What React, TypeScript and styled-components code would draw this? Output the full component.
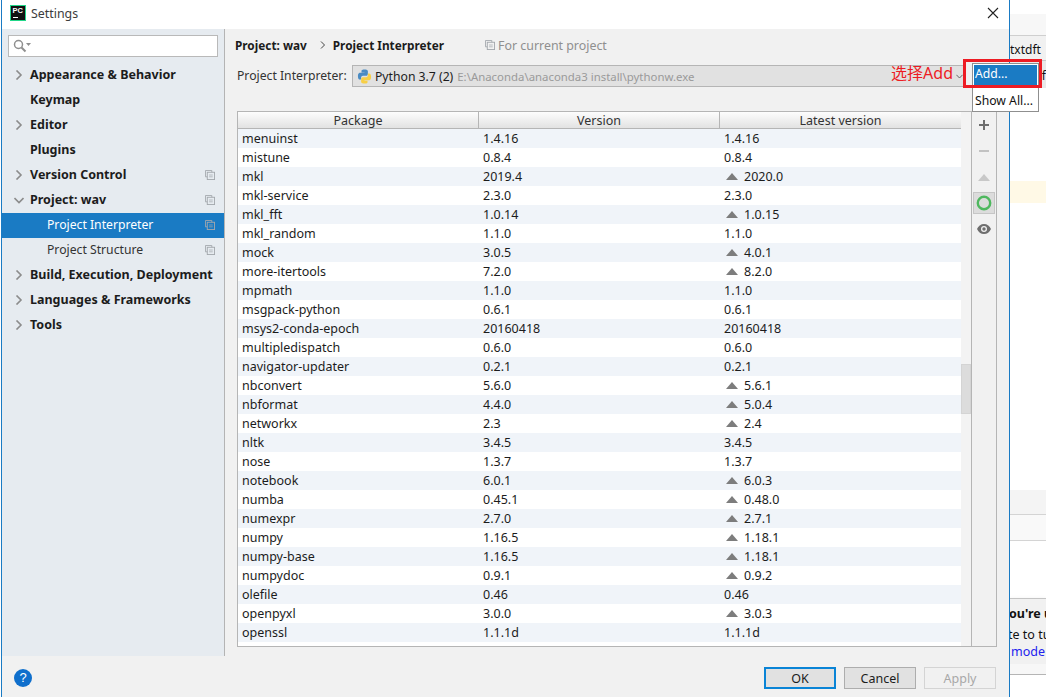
import React from "react";
import styled, { createGlobalStyle } from "styled-components";

const Global = createGlobalStyle`
  html, body { margin: 0; padding: 0; background: #fff; overflow: hidden; }
  #root { width: 1046px; height: 697px; }
  * { box-sizing: border-box; }
`;

const FONT = `"Noto Sans", "Noto Sans CJK SC", sans-serif`;

const Screen = styled.div`
  position: relative;
  width: 1046px;
  height: 697px;
  display: flex;
  overflow: hidden;
  background: #fff;
  padding-left: 1px;
  font: 12.5px ${FONT};
  color: #1c1c1c;
`;

const Dialog = styled.div`
  width: 1009px;
  height: 697px;
  flex: none;
  display: flex;
  flex-direction: column;
  border-left: 1px solid #1a7bc4;
  border-right: 1px solid #1a7bc4;
  background: #f1f1f1;
`;

const TitleBar = styled.div`
  height: 29px;
  flex: none;
  background: #fff;
  display: flex;
  align-items: center;
  padding: 0 10px 3px 8px;
  gap: 5px;
  position: relative;
`;

const Logo = styled.div`
  width: 16px;
  height: 16px;
  background: #111;
  border: 1px solid #21d789;
  color: #fff;
  font: bold 7.5px/8px "Liberation Sans", sans-serif;
  padding-left: 1.5px;
  padding-top: 1px;
  position: relative;
  &::after {
    content: "";
    position: absolute;
    left: 2px;
    bottom: 2px;
    width: 5px;
    height: 1px;
    background: #fff;
  }
`;

const TitleText = styled.span`
  color: #3c3c3c;
  font-size: 12.4px;
`;

const CloseBtn = styled.div`
  margin-left: auto;
  width: 12px;
  height: 12px;
  display: flex;
`;

const Body = styled.div`
  flex: 1;
  min-height: 0;
  display: flex;
`;

const Sidebar = styled.div`
  width: 223px;
  flex: none;
  background: #e6ebf0;
  border-right: 1px solid #b4b4b4;
  padding-top: 6px;
  display: flex;
  flex-direction: column;
`;

const SearchBox = styled.div`
  width: 210px;
  height: 22px;
  margin-left: 6px;
  margin-bottom: 6px;
  background: #fff;
  border: 1px solid #b9b9b9;
  display: flex;
  align-items: center;
  padding-left: 4px;
`;

const NavRow = styled.div<{ $depth?: number; $selected?: boolean; $bold?: boolean }>`
  height: 25px;
  flex: none;
  display: flex;
  align-items: center;
  padding: 0 9px 2px ${(p) => (p.$depth ? 45 : 12)}px;
  background: ${(p) => (p.$selected ? "#1a7bc4" : "transparent")};
  color: ${(p) => (p.$selected ? "#fff" : p.$depth ? "#333" : "#1c1c1c")};
  font-weight: ${(p) => (p.$bold ? 700 : 400)};
  font-size: ${(p) => (p.$bold ? "12.5px" : "12.2px")};
`;

const Arrow = styled.span`
  width: 16px;
  flex: none;
  display: flex;
  align-items: center;
`;

const NavLabel = styled.span`
  flex: 1;
  white-space: nowrap;
`;

const Main = styled.div`
  flex: 1;
  min-width: 0;
  padding: 0 12px 9px 12px;
  display: flex;
  flex-direction: column;
`;

const Breadcrumb = styled.div`
  height: 34px;
  flex: none;
  display: flex;
  align-items: center;
  margin-left: -2px;
  padding-bottom: 2px;
  font-size: 11.8px;
  font-weight: 700;
  white-space: nowrap;
`;

const CrumbSep = styled.span`
  width: 26px;
  display: flex;
  justify-content: center;
  padding-left: 6px;
`;

const Scope = styled.span`
  margin-left: 41px;
  display: flex;
  align-items: center;
  gap: 3px;
  font-size: 12.4px;
  font-weight: 400;
  color: #8f8f8f;
`;

const InterpreterRow = styled.div`
  height: 24px;
  flex: none;
  display: flex;
  align-items: center;
  margin-right: 31px;
  margin-bottom: 24px;
  white-space: nowrap;
`;

const FieldLabel = styled.span`
  width: 115px;
  flex: none;
  font-size: 12.2px;
  color: #333;
`;

const Combo = styled.div`
  flex: 1;
  height: 22px;
  margin-top: 2px;
  background: #e1e1e1;
  border: 1px solid #b5b5b5;
  display: flex;
  align-items: center;
  padding: 0 2px 0 4px;
  gap: 3px;
  font-size: 12.2px;
`;

const InterpreterName = styled.span`
  margin-right: 1px;
`;

const Path = styled.span`
  color: #9a9a9a;
  font-size: 11.4px;
`;

const ComboNote = styled.span`
  margin-left: auto;
  margin-bottom: 6px;
  color: #ed1c24;
  font-size: 16px;
  line-height: 16px;
`;

const PackagesFrame = styled.div`
  flex: 1;
  min-height: 0;
  display: flex;
  border: 1px solid #b5b5b5;
  background: #f1f1f1;
`;

const TableWrap = styled.div`
  width: 723px;
  flex: none;
  display: flex;
  flex-direction: column;
  background: #fff;
`;

const HeaderRow = styled.div`
  height: 17px;
  flex: none;
  display: grid;
  grid-template-columns: 241px 241px 241px;
  background: linear-gradient(#fdfdfd, #e2e2e2);
  border-bottom: 1px solid #b5b5b5;
`;

const HeaderCell = styled.div`
  text-align: center;
  line-height: 18px;
  color: #333;
  border-right: 1px solid #b5b5b5;
  margin-bottom: 1px;
  &:last-child { border-right: none; }
`;

const DataRow = styled.div<{ $odd: boolean }>`
  height: 19px;
  flex: none;
  display: grid;
  grid-template-columns: 241px 241px 241px;
  background: ${(p) => (p.$odd ? "#f0f4f9" : "#fff")};
  line-height: 20px;
`;

const Cell = styled.div`
  padding-left: 4px;
  white-space: nowrap;
`;

const UpdateCell = styled(Cell)`
  padding-left: 6px;
  display: flex;
  align-items: flex-start;
  gap: 6px;
`;

const RowTriangle = styled.span`
  display: flex;
  margin-top: 6px;
`;

const ScrollTrack = styled.div`
  width: 10px;
  flex: none;
  background: #f3f3f3;
  padding-top: 252px;
`;

const ScrollThumb = styled.div`
  height: 50px;
  background: #dcdcdc;
  border: 1px solid #d4d4d4;
`;

const SideTools = styled.div`
  flex: 1;
  border-left: 1px solid #b5b5b5;
  padding-top: 2px;
  display: flex;
  flex-direction: column;
  align-items: center;
`;

const ToolBtn = styled.div<{ $active?: boolean }>`
  width: 22px;
  height: 22px;
  margin-bottom: 4px;
  display: flex;
  align-items: center;
  justify-content: center;
  background: ${(p) => (p.$active ? "#dcdcdc" : "transparent")};
  border: 1px solid ${(p) => (p.$active ? "#c6c6c6" : "transparent")};
`;

const Footer = styled.div`
  height: 41px;
  flex: none;
  display: flex;
  align-items: flex-start;
  padding: 11px 13px 0 12px;
  gap: 8px;
`;

const Help = styled.div`
  width: 18px;
  height: 18px;
  margin-top: 2px;
  margin-right: auto;
  border-radius: 50%;
  background: #0f6fcc;
  color: #fff;
  font: 13px/18px "Liberation Sans", sans-serif;
  text-align: center;
`;

const Button = styled.div<{ $primary?: boolean; $disabled?: boolean }>`
  width: 72px;
  height: 22px;
  display: flex;
  align-items: center;
  justify-content: center;
  background: ${(p) => (p.$disabled ? "#f1f1f1" : "#e1e1e1")};
  border: ${(p) =>
    p.$primary ? "2px solid #0a84d6" : p.$disabled ? "1px solid #d4d4d4" : "1px solid #adadad"};
  color: ${(p) => (p.$disabled ? "#a8a8a8" : "#1c1c1c")};
`;

const Backdrop = styled.div`
  flex: 1;
  min-width: 0;
  display: flex;
  flex-direction: column;
  overflow: hidden;
  color: #111;
  white-space: nowrap;
`;

const Band = styled.div<{ $h: number; $bg?: string; $line?: string; $lh?: number; $right?: boolean }>`
  height: ${(p) => p.$h}px;
  flex: none;
  background: ${(p) => p.$bg ?? "#fff"};
  border-bottom: ${(p) => (p.$line ? `1px solid ${p.$line}` : "none")};
  line-height: ${(p) => p.$lh ?? p.$h - 1}px;
  font-size: 12px;
  text-align: ${(p) => (p.$right ? "right" : "left")};
`;

const Notice = styled.div`
  height: 66px;
  flex: none;
  background: #f1f1f1;
  border-top: 1px solid #c4c4c4;
  box-shadow: 0 3px 5px rgba(0, 0, 0, 0.25);
  padding-left: 1px;
  line-height: 17px;
  padding-top: 6px;
`;

const NoticeTitle = styled.div`
  font-weight: 700;
  height: 21px;
  margin-left: -2px;
`;

const NoticeLine = styled.div`
  margin-left: -3px;
`;

const NoticeLink = styled.div`
  color: #2222ee;
`;

const Menu = styled.div`
  position: absolute;
  left: 972px;
  top: 63px;
  width: 67px;
  height: 49px;
  background: #fff;
  border: 1px solid #8f8f8f;
  padding: 1px;
  font-size: 12.2px;
`;

const MenuItem = styled.div<{ $active?: boolean }>`
  height: ${(p) => (p.$active ? 21 : 24)}px;
  background: ${(p) => (p.$active ? "#1a7bc4" : "transparent")};
  color: ${(p) => (p.$active ? "#fff" : "#111")};
  padding-left: 1px;
  line-height: ${(p) => (p.$active ? 18 : 30)}px;
  white-space: nowrap;
`;

const RedMark = styled.div`
  position: absolute;
  left: 963px;
  top: 59px;
  width: 79px;
  height: 29px;
  border: 3px solid #ed1c24;
`;

type Nav = { label: string; arrow?: "r" | "d"; depth?: number; selected?: boolean; copy?: boolean };
const NAV: Nav[] = [
  { label: "Appearance & Behavior", arrow: "r" },
  { label: "Keymap" },
  { label: "Editor", arrow: "r" },
  { label: "Plugins" },
  { label: "Version Control", arrow: "r", copy: true },
  { label: "Project: wav", arrow: "d", copy: true },
  { label: "Project Interpreter", depth: 1, selected: true, copy: true },
  { label: "Project Structure", depth: 1, copy: true },
  { label: "Build, Execution, Deployment", arrow: "r" },
  { label: "Languages & Frameworks", arrow: "r" },
  { label: "Tools", arrow: "r" },
];

const ROWS: [string, string, string, boolean][] = [
  ["menuinst", "1.4.16", "1.4.16", false],
  ["mistune", "0.8.4", "0.8.4", false],
  ["mkl", "2019.4", "2020.0", true],
  ["mkl-service", "2.3.0", "2.3.0", false],
  ["mkl_fft", "1.0.14", "1.0.15", true],
  ["mkl_random", "1.1.0", "1.1.0", false],
  ["mock", "3.0.5", "4.0.1", true],
  ["more-itertools", "7.2.0", "8.2.0", true],
  ["mpmath", "1.1.0", "1.1.0", false],
  ["msgpack-python", "0.6.1", "0.6.1", false],
  ["msys2-conda-epoch", "20160418", "20160418", false],
  ["multipledispatch", "0.6.0", "0.6.0", false],
  ["navigator-updater", "0.2.1", "0.2.1", false],
  ["nbconvert", "5.6.0", "5.6.1", true],
  ["nbformat", "4.4.0", "5.0.4", true],
  ["networkx", "2.3", "2.4", true],
  ["nltk", "3.4.5", "3.4.5", false],
  ["nose", "1.3.7", "1.3.7", false],
  ["notebook", "6.0.1", "6.0.3", true],
  ["numba", "0.45.1", "0.48.0", true],
  ["numexpr", "2.7.0", "2.7.1", true],
  ["numpy", "1.16.5", "1.18.1", true],
  ["numpy-base", "1.16.5", "1.18.1", true],
  ["numpydoc", "0.9.1", "0.9.2", true],
  ["olefile", "0.46", "0.46", false],
  ["openpyxl", "3.0.0", "3.0.3", true],
  ["openssl", "1.1.1d", "1.1.1d", false],
];

const CopyIcon = ({ color = "#a3a8ad" }: { color?: string }) => (
  <svg width="10" height="10" viewBox="0 0 11 11" fill="none" stroke={color} strokeWidth="1">
    <path d="M2.5 7.5H.5V.5h7v2" />
    <rect x="2.5" y="2.5" width="8" height="8" />
    <path d="M4.5 5.5h4M4.5 7.5h4" strokeWidth="0.8" />
  </svg>
);

const Chevron = ({ dir }: { dir: "r" | "d" }) => (
  <svg width="10" height="10" viewBox="0 0 10 10" fill="none" stroke="#8c8c8c" strokeWidth="1.6">
    {dir === "r" ? <path d="M2.5 .5L7 5 2.5 9.5" /> : <path d="M.5 3L5 7.5 9.5 3" />}
  </svg>
);

const UpTriangle = ({ color = "#7d7d7d" }: { color?: string }) => (
  <svg width="12" height="7" viewBox="0 0 12 7">
    <path d="M6 0l6 7H0z" fill={color} />
  </svg>
);

const PythonIcon = () => (
  <svg width="15" height="15" viewBox="0 0 16 16">
    <path
      d="M7.9 0.5C4.6 0.5 4.8 2 4.8 2v1.6h3.2v.5H3.4S1 3.8 1 7.6c0 3.7 2.1 3.6 2.1 3.6h1.3V9.4s-.1-2.1 2.1-2.1h3.1s2 0 2-2V2.5S11.9 .5 7.9 .5z"
      fill="#4a8bc2"
    />
    <path
      d="M8.1 15.5c3.3 0 3.1-1.5 3.1-1.5v-1.6H8v-.5h4.6s2.4.3 2.4-3.5c0-3.7-2.1-3.6-2.1-3.6h-1.3v1.8s.1 2.1-2.1 2.1H6.4s-2 0-2 2v2.8s-.3 2 3.7 2z"
      fill="#f7cf46"
    />
  </svg>
);

export default function App() {
  return (
    <Screen>
      <Global />
      <Dialog>
        <TitleBar>
          <Logo>PC</Logo>
          <TitleText>Settings</TitleText>
          <CloseBtn>
            <svg width="12" height="12" viewBox="0 0 12 12" stroke="#222" strokeWidth="1.1">
              <path d="M1 1l10 10M11 1L1 11" />
            </svg>
          </CloseBtn>
        </TitleBar>
        <Body>
          <Sidebar>
            <SearchBox>
              <svg width="20" height="14" viewBox="0 0 20 14" fill="none">
                <circle cx="5.5" cy="5.5" r="4" stroke="#8f8f8f" strokeWidth="1.5" />
                <path d="M8.5 8.5l4 4" stroke="#8f8f8f" strokeWidth="2" />
                <path d="M13 4h5l-2.5 3z" fill="#8f8f8f" />
              </svg>
            </SearchBox>
            {NAV.map((n) => (
              <NavRow key={n.label} $depth={n.depth} $selected={n.selected} $bold={!n.depth}>
                {!n.depth && <Arrow>{n.arrow && <Chevron dir={n.arrow} />}</Arrow>}
                <NavLabel>{n.label}</NavLabel>
                {n.copy && <CopyIcon />}
              </NavRow>
            ))}
          </Sidebar>
          <Main>
            <Breadcrumb>
              <span>Project: wav</span>
              <CrumbSep>
                <svg width="6" height="8" viewBox="0 0 6 8" fill="none" stroke="#444" strokeWidth="1">
                  <path d="M1 0.5l3.5 3.5L1 7.5" />
                </svg>
              </CrumbSep>
              <span>Project Interpreter</span>
              <Scope>
                <CopyIcon />
                For current project
              </Scope>
            </Breadcrumb>
            <InterpreterRow>
              <FieldLabel>Project Interpreter:</FieldLabel>
              <Combo>
                <PythonIcon />
                <InterpreterName>Python 3.7 (2)</InterpreterName>
                <Path>E:\Anaconda\anaconda3 install\pythonw.exe</Path>
                <ComboNote>选择Add</ComboNote>
                <svg width="7" height="5" viewBox="0 0 7 5" fill="none" stroke="#666" strokeWidth="1">
                  <path d="M.4 .8l3.1 3.2L6.6 .8" />
                </svg>
              </Combo>
            </InterpreterRow>
            <PackagesFrame>
              <TableWrap>
                <HeaderRow>
                  <HeaderCell>Package</HeaderCell>
                  <HeaderCell>Version</HeaderCell>
                  <HeaderCell>Latest version</HeaderCell>
                </HeaderRow>
                {ROWS.map(([name, version, latest, update], i) => (
                  <DataRow key={name} $odd={i % 2 === 0}>
                    <Cell>{name}</Cell>
                    <Cell>{version}</Cell>
                    {update ? (
                      <UpdateCell>
                        <RowTriangle>
                          <UpTriangle />
                        </RowTriangle>
                        {latest}
                      </UpdateCell>
                    ) : (
                      <Cell>{latest}</Cell>
                    )}
                  </DataRow>
                ))}
              </TableWrap>
              <ScrollTrack>
                <ScrollThumb />
              </ScrollTrack>
              <SideTools>
                <ToolBtn>
                  <svg width="12" height="12" viewBox="0 0 12 12" stroke="#6e6e6e" strokeWidth="2">
                    <path d="M6 1v10M1 6h10" />
                  </svg>
                </ToolBtn>
                <ToolBtn>
                  <svg width="12" height="12" viewBox="0 0 12 12" stroke="#c2c2c2" strokeWidth="2">
                    <path d="M1 6h10" />
                  </svg>
                </ToolBtn>
                <ToolBtn>
                  <UpTriangle color="#c8c8c8" />
                </ToolBtn>
                <ToolBtn $active>
                  <svg width="16" height="16" viewBox="0 0 16 16" fill="none" stroke="#4fb85f" strokeWidth="2.4">
                    <circle cx="8" cy="8" r="6.2" />
                  </svg>
                </ToolBtn>
                <ToolBtn>
                  <svg width="14" height="10" viewBox="0 0 14 10">
                    <path d="M7 0C3.8 0 1.3 2 0 5c1.3 3 3.8 5 7 5s5.7-2 7-5c-1.3-3-3.8-5-7-5z" fill="#6e6e6e" />
                    <circle cx="7" cy="5" r="3" fill="#f1f1f1" />
                    <circle cx="7" cy="5" r="1.7" fill="#6e6e6e" />
                  </svg>
                </ToolBtn>
              </SideTools>
            </PackagesFrame>
          </Main>
        </Body>
        <Footer>
          <Help>?</Help>
          <Button $primary>OK</Button>
          <Button>Cancel</Button>
          <Button $disabled>Apply</Button>
        </Footer>
      </Dialog>
      <Backdrop>
        <Band $h={14} />
        <Band $h={22} $bg="#f7f7f7" $line="#cfcfcf" />
        <Band $h={25} $bg="#f1f1f1" $line="#c8c8c8" $lh={28}>txtdft</Band>
        <Band $h={27} $bg="#e9e9e9" $lh={30} $right>f</Band>
        <Band $h={93} />
        <Band $h={22} $bg="#fff9e6" />
        <Band $h={287} />
        <Band $h={25} $bg="#f4f4f4" $line="#d4d4d4" />
        <Band $h={26} $bg="#f9f9f9" $line="#d4d4d4" />
        <Band $h={57} />
        <Notice>
          <NoticeTitle>ou're u</NoticeTitle>
          <NoticeLine>te to tu</NoticeLine>
          <NoticeLink>mode</NoticeLink>
        </Notice>
        <Band $h={11} $bg="#f7f7f7" $line="#b5b5b5" />
      </Backdrop>
      <Menu>
        <MenuItem $active>Add...</MenuItem>
        <MenuItem>Show All...</MenuItem>
      </Menu>
      <RedMark />
    </Screen>
  );
}
